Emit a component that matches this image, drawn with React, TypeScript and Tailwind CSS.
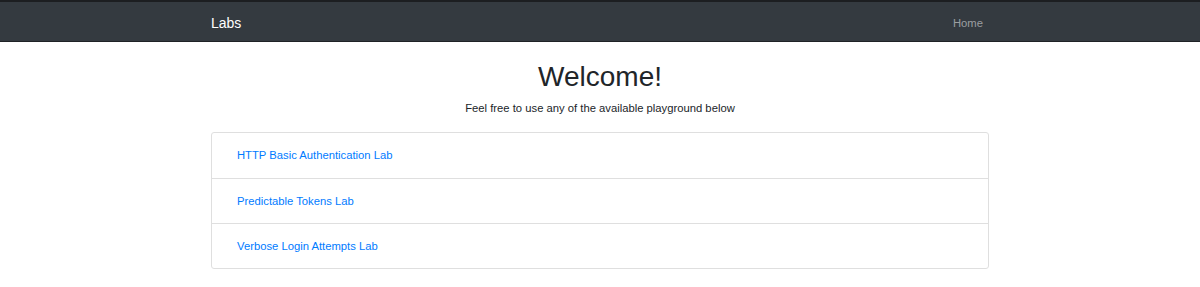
import React from "react";

const labs = [
  "HTTP Basic Authentication Lab",
  "Predictable Tokens Lab",
  "Verbose Login Attempts Lab",
];

const App = () => {
  return (
    <div className="min-h-[287px] bg-white font-['Liberation_Sans',Arial,sans-serif]">
      {/* navbar */}
      <nav className="h-[42px] border-t-2 border-b border-t-[#1c1e21] border-b-[#1f2226] bg-[#343a40]">
        <div className="mx-auto flex h-full w-[778px] items-center justify-between pt-[3px]">
          <a className="text-[14px] text-white">Labs</a>
          <a className="mr-[6px] mt-[1px] text-[11.25px] text-[#9b9ea1]">Home</a>
        </div>
      </nav>

      <main className="mx-auto w-[778px]">
        <h1 className="mt-[15px] text-center text-[28px] leading-[40px] text-[#212529]">
          Welcome!
        </h1>
        <p className="mt-[2px] text-center text-[11.25px] leading-[18px] text-[#212529]">
          Feel free to use any of the available playground below
        </p>

        <div className="mt-[15px] rounded-[3px] border border-[#dfdfdf]">
          {labs.map((lab, i) => (
            <div
              key={lab}
              className={
                "flex h-[45px] items-center pl-[25px] text-[11.25px] " +
                (i > 0 ? "border-t border-[#dfdfdf]" : "")
              }
            >
              <a className="text-[#007bff]">{lab}</a>
            </div>
          ))}
        </div>
      </main>
    </div>
  );
};

export default App;
